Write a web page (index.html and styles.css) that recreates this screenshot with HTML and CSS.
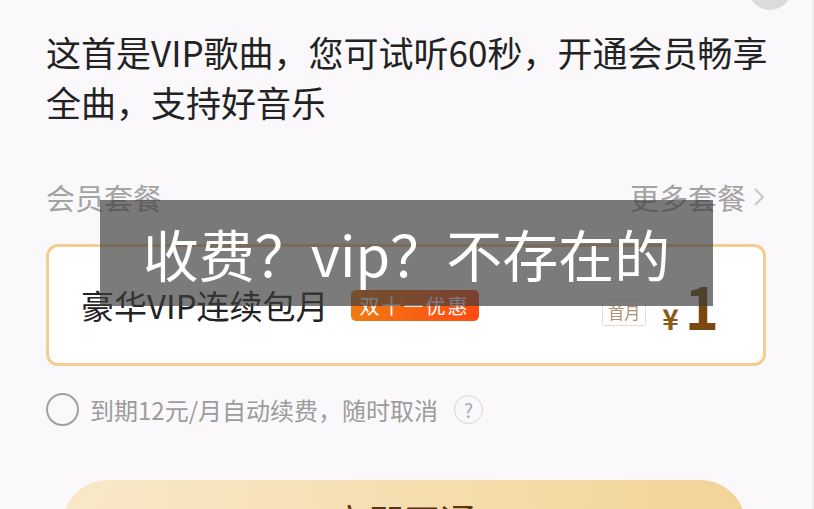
FILE: index.html
```html
<!DOCTYPE html>
<html lang="zh-CN">
<head>
  <meta charset="UTF-8">
  <meta name="viewport" content="width=device-width, initial-scale=1.0">
  <title>开通会员</title>
  <link rel="stylesheet" href="styles.css">
</head>
<body>
  <div class="sheet">
    <div class="close-dot"></div>

    <p class="intro">这首是VIP歌曲，您可试听60秒，开通会员畅享<br>全曲，支持好音乐</p>

    <div class="plans-header">
      <span>会员套餐</span>
      <span class="more">更多套餐
        <svg width="14" height="24" viewBox="0 0 14 24"><path d="M3 4 L11 12 L3 20" fill="none" stroke="#c8c8c8" stroke-width="2"/></svg>
      </span>
    </div>

    <div class="plan-card">
      <span class="plan-name">豪华VIP连续包月</span>
      <span class="promo">双十一优惠</span>
      <span class="first-month">首月</span>
      <span class="price"><span class="yen">¥</span>1</span>
    </div>

    <div class="renew-row">
      <span class="check"></span>
      <span class="renew-text">到期12元/月自动续费，随时取消</span>
      <span class="help">?</span>
    </div>

    <button class="open-btn">立即开通</button>

    <div class="toast">收费？vip？不存在的</div>
  </div>
</body>
</html>
```
FILE: styles.css
```css
body {
  margin: 0;
  background: #faf8fb;
  font-family: "Noto Sans CJK SC", "Noto Sans", sans-serif;
  color: #222;
  overflow: hidden;
}

.sheet {
  position: relative;
  height: 509px;
  padding: 0 46px;
  box-sizing: border-box;
  border-right: 2px solid #f0eef2;
}

.close-dot {
  position: absolute;
  left: 748px;
  top: -34px;
  width: 44px;
  height: 44px;
  border-radius: 50%;
  background: #dcdadd;
}

.intro {
  margin: 0 -12px 0 0;
  padding-top: 27px;
  font-size: 35px;
  line-height: 50px;
  color: #222;
  white-space: nowrap;
}

.plans-header {
  display: flex;
  justify-content: space-between;
  align-items: center;
  margin-top: 52px;
  font-size: 29px;
  line-height: 36px;
  color: #a3a3a3;
}

.more {
  display: flex;
  align-items: center;
  gap: 6px;
}

.plan-card {
  display: flex;
  align-items: center;
  margin-top: 29px;
  height: 122px;
  box-sizing: border-box;
  padding: 0 44px 0 32px;
  border: 3px solid #f4cd92;
  border-radius: 12px;
  background: #fff;
}

.plan-name {
  font-size: 33px;
  color: #222;
}

.promo {
  margin-left: 22px;
  padding: 0 9px;
  height: 31px;
  line-height: 31px;
  border-radius: 5px;
  background: linear-gradient(to right, #f07a12, #ff4a12);
  color: #fff;
  font-size: 20px;
  letter-spacing: 2px;
}

.first-month {
  margin-left: auto;
  margin-top: 14px;
  padding: 0 5px;
  height: 25px;
  line-height: 25px;
  border: 1px solid #eadccb;
  border-radius: 3px;
  color: #b09070;
  font-size: 16px;
}

.price {
  margin-left: 16px;
  font-size: 58px;
  font-weight: 700;
  line-height: 1;
  color: #7a4810;
}

.yen {
  margin-right: 6px;
  font-size: 28px;
  color: #8a5a1a;
}

.renew-row {
  display: flex;
  align-items: center;
  margin-top: 27px;
  height: 32px;
}

.check {
  width: 29px;
  height: 29px;
  border: 2px solid #a0a0a0;
  border-radius: 50%;
}

.renew-text {
  margin-left: 11px;
  font-size: 24px;
  color: #9c9c9c;
}

.help {
  margin-left: 16px;
  width: 27px;
  height: 27px;
  line-height: 27px;
  text-align: center;
  border: 1px solid #d4d4d4;
  border-radius: 50%;
  color: #aaa;
  font-size: 19px;
}

.open-btn {
  display: block;
  margin: 55px 20px 0 16px;
  width: calc(100% - 36px);
  height: 92px;
  border: 0;
  border-radius: 46px;
  background: linear-gradient(to right, #f9e8c9, #f2d497);
  color: #5a3412;
  font-family: inherit;
  font-size: 36px;
  padding: 0 0 12px;
}

.toast {
  position: absolute;
  left: 100px;
  top: 200px;
  width: 613px;
  height: 106px;
  background: rgba(60, 60, 60, 0.68);
  color: #fff;
  font-size: 56px;
  line-height: 106px;
  text-align: center;
}
```
